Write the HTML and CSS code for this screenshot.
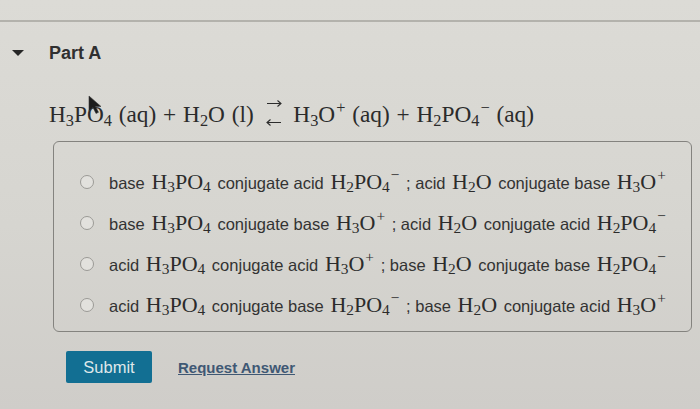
FILE: index.html
```html
<!DOCTYPE html>
<html lang="en">
<head>
<meta charset="UTF-8">
<title>Part A</title>
<meta name="viewport" content="width=device-width, initial-scale=1.0">
<link rel="stylesheet" href="styles.css">
</head>
<body>

<div class="topbar"></div>

<section class="part">
  <div class="part-head">
    <span class="caret"></span>
    <h2>Part A</h2>
  </div>

  <p class="equation">
    <span class="chem">H<span class="sb">3</span>PO<span class="sb">4</span></span> (aq) + <span class="chem">H<span class="sb">2</span>O</span> (l)
    <svg class="eq-arrow" width="22" height="30" viewBox="0 0 22 30">
      <path d="M4 5.5h14M14.5 2.5l3.5 3-3.5 3" fill="none" stroke="#2c2c2c" stroke-width="1.1"/>
      <path d="M18 24.5H4M7.5 21.5L4 24.5l3.5 3" fill="none" stroke="#2c2c2c" stroke-width="1.1"/>
    </svg>
    <span class="chem">H<span class="sb">3</span>O<span class="sp">+</span></span> (aq) + <span class="chem">H<span class="sb">2</span>PO<span class="sb">4</span><span class="sp">−</span></span> (aq)
  </p>

  <ul class="choices">
    <li class="choice">
      <span class="radio"></span>
      <span class="label">base <span class="chem">H<span class="sb">3</span>PO<span class="sb">4</span></span> conjugate acid <span class="chem">H<span class="sb">2</span>PO<span class="sb">4</span><span class="sp">−</span></span> ; acid <span class="chem">H<span class="sb">2</span>O</span> conjugate base <span class="chem">H<span class="sb">3</span>O<span class="sp">+</span></span></span>
    </li>
    <li class="choice">
      <span class="radio"></span>
      <span class="label">base <span class="chem">H<span class="sb">3</span>PO<span class="sb">4</span></span> conjugate base <span class="chem">H<span class="sb">3</span>O<span class="sp">+</span></span> ; acid <span class="chem">H<span class="sb">2</span>O</span> conjugate acid <span class="chem">H<span class="sb">2</span>PO<span class="sb">4</span><span class="sp">−</span></span></span>
    </li>
    <li class="choice">
      <span class="radio"></span>
      <span class="label">acid <span class="chem">H<span class="sb">3</span>PO<span class="sb">4</span></span> conjugate acid <span class="chem">H<span class="sb">3</span>O<span class="sp">+</span></span> ; base <span class="chem">H<span class="sb">2</span>O</span> conjugate base <span class="chem">H<span class="sb">2</span>PO<span class="sb">4</span><span class="sp">−</span></span></span>
    </li>
    <li class="choice">
      <span class="radio"></span>
      <span class="label">acid <span class="chem">H<span class="sb">3</span>PO<span class="sb">4</span></span> conjugate base <span class="chem">H<span class="sb">2</span>PO<span class="sb">4</span><span class="sp">−</span></span> ; base <span class="chem">H<span class="sb">2</span>O</span> conjugate acid <span class="chem">H<span class="sb">3</span>O<span class="sp">+</span></span></span>
    </li>
  </ul>

  <div class="actions">
    <button class="submit">Submit</button>
    <a class="request" href="#">Request Answer</a>
  </div>
</section>

<!-- mouse pointer resting over the equation -->
<svg class="pointer" width="16" height="20" viewBox="0 0 16 20">
  <path d="M1 1v15l4-3.5 3 6 2.5-1.2-3-5.8h5.5z" fill="#1c1c1c" stroke="#3a3a3a" stroke-width="0.6"/>
</svg>

</body>
</html>
```

FILE: styles.css
```css
*{box-sizing:border-box}
body{
  margin:0;
  height:409px;
  overflow:hidden;
  font-family:"Liberation Sans", Arial, sans-serif;
  color:#363636;
  background:linear-gradient(180deg,#dcdbd6 0%,#d6d5d0 55%,#cfcdc9 100%);
  position:relative;
}

.topbar{
  height:22px;
  border-bottom:2px solid #b3b2ac;
}

/* HEADER */
.part-head{
  display:flex;
  align-items:center;
  height:58px;
  padding:4px 0 0 12px;
}
.caret{
  width:0;
  height:0;
  border-left:6.5px solid transparent;
  border-right:6.5px solid transparent;
  border-top:6px solid #262626;
  margin-right:25px;
}
.part-head h2{
  margin:0;
  font-size:18px;
  font-weight:bold;
  color:#303030;
}

/* FORMULAS */
.chem, .equation{
  font-family:"Liberation Serif", "Times New Roman", serif;
}
.chem{
  font-size:22px;
  color:#2b2b2b;
}
.sb, .sp{
  font-size:70%;
  line-height:0;
  position:relative;
}
.sb{top:0.25em}
.sp{top:-0.55em;margin-left:1px}

.equation{
  margin:0;
  padding:18px 0 0 49px;
  height:61px;
  font-size:23.3px;
  color:#2b2b2b;
  white-space:nowrap;
  word-spacing:1px;
}
.equation .chem{font-size:inherit}
.eq-arrow{
  vertical-align:-6px;
  margin:0 2px;
}

/* CHOICES */
.choices{
  list-style:none;
  margin:0 0 0 53px;
  width:639px;
  height:191px;
  padding:19px 0 0 26px;
  border:1.5px solid #84837f;
  border-radius:6px;
}
.choice{
  display:flex;
  align-items:center;
  height:41px;
}
.radio{
  width:14px;
  height:14px;
  border-radius:50%;
  border:1.5px solid #9b9a96;
  background:#e2e1dd;
  margin-right:15px;
  flex:none;
}
.label{
  font-size:16.5px;
  white-space:nowrap;
  color:#333;
}
.label .chem{margin:0 2px}

/* ACTIONS */
.actions{
  display:flex;
  align-items:center;
  padding:19px 0 0 66px;
}
.submit{
  width:86px;
  height:32px;
  border:none;
  border-radius:2px;
  background:#126f93;
  color:#dfe7ea;
  font-family:inherit;
  font-size:16.5px;
}
.request{
  margin-left:26px;
  font-size:15px;
  font-weight:bold;
  color:#3f5874;
  text-decoration:underline;
}

.pointer{
  position:absolute;
  left:88px;
  top:95px;
}
```
